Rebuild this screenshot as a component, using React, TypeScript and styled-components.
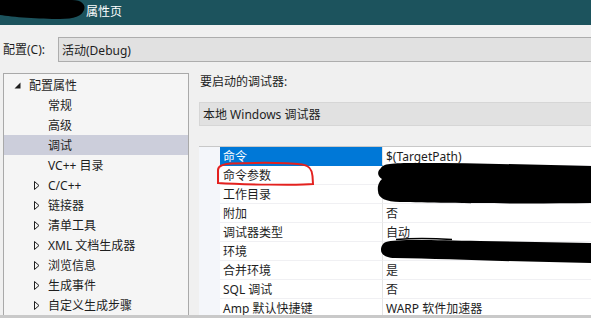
import React from "react";
import styled, { createGlobalStyle } from "styled-components";

const Global = createGlobalStyle`
  html, body { margin: 0; padding: 0; background: #f0f0f0; }
  body {
    font-family: "Noto Sans", "Noto Sans CJK SC", sans-serif;
    font-size: 12px;
    color: #1e1e1e;
  }
`;

const Window = styled.div`
  position: relative;
  width: 591px;
  height: 318px;
  overflow: hidden;
  display: flex;
  flex-direction: column;
  background: #f0f0f0;
`;

const TitleBar = styled.div`
  flex: none;
  height: 25px;
  box-sizing: border-box;
  padding: 0 0 3px 86px;
  background: #1c535d;
  color: #ffffff;
  display: flex;
  align-items: center;
  font-size: 12px;
`;

const ConfigRow = styled.div`
  flex: none;
  height: 48px;
  box-sizing: border-box;
  padding: 12px 0 11px 3px;
  display: flex;
  align-items: center;
`;

const ConfigLabel = styled.span`
  width: 55px;
  flex: none;
  line-height: 16px;
`;

const ComboBox = styled.div<{ $h: number; $border: string }>`
  flex: 1;
  height: ${(p) => p.$h}px;
  box-sizing: border-box;
  background: #e1e1e1;
  border: 1px solid ${(p) => p.$border};
  border-right: none;
  display: flex;
  align-items: center;
  padding-left: 3px;
  white-space: nowrap;
`;

const Body = styled.div`
  flex: none;
  height: 242px;
  display: flex;
  min-height: 0;
`;

const TreePanel = styled.div`
  flex: none;
  width: 186px;
  margin-left: 3px;
  box-sizing: border-box;
  border: 1px solid #a9a9a9;
  border-bottom: none;
  background: #f5f5f5;
  padding-top: 1px;
  display: flex;
  flex-direction: column;
`;

const TreeRow = styled.div<{ $indent: number; $selected?: boolean }>`
  height: 20px;
  flex: none;
  display: flex;
  align-items: center;
  padding-left: ${(p) => p.$indent}px;
  background: ${(p) => (p.$selected ? "#cccedb" : "transparent")};
  white-space: nowrap;
`;

const ArrowSlot = styled.span<{ $w: number }>`
  width: ${(p) => p.$w}px;
  flex: none;
  display: flex;
  align-items: center;
`;

const RightPane = styled.div`
  flex: 1;
  margin-left: 10px;
  display: flex;
  flex-direction: column;
  min-width: 0;
`;

const PaneLabel = styled.div`
  height: 18px;
  line-height: 18px;
  padding-left: 1px;
`;

const ComboWrap = styled.div`
  margin-top: 11px;
  display: flex;
`;

const Grid = styled.div`
  margin-top: 20px;
  flex: 1;
  border-top: 1px solid #c8c8c8;
  background: #ffffff;
  display: flex;
  flex-direction: column;
`;

const GridRow = styled.div`
  display: grid;
  grid-template-columns: 21px 163px 1fr;
  height: 19px;
  flex: none;
`;

const Margin = styled.div`
  background: #f4f6fa;
`;

const NameCell = styled.div<{ $selected?: boolean }>`
  box-sizing: border-box;
  padding-left: 3px;
  display: flex;
  align-items: center;
  white-space: nowrap;
  background: ${(p) => (p.$selected ? "#0078d7" : "#ffffff")};
  color: ${(p) => (p.$selected ? "#ffffff" : "#1e1e1e")};
  border-bottom: 1px solid ${(p) => (p.$selected ? "#0078d7" : "#f0f0f3")};
  border-right: 1px solid #e4e4e4;
`;

const ValueCell = styled.div`
  box-sizing: border-box;
  padding-left: 3px;
  display: flex;
  align-items: center;
  white-space: nowrap;
  border-bottom: 1px solid #f0f0f3;
`;

const BottomStrip = styled.div`
  flex: none;
  height: 3px;
  background: #c9c9c9;
`;

const Overlay = styled.svg`
  position: absolute;
  left: 0;
  top: 0;
  pointer-events: none;
`;

const Expanded = () => (
  <svg width="7" height="7" viewBox="0 0 7 7">
    <path d="M6.5 0.5 L6.5 6.5 L0.5 6.5 Z" fill="#1e1e1e" />
  </svg>
);

const Collapsed = () => (
  <svg width="6" height="9" viewBox="0 0 6 9">
    <path d="M0.5 0.5 L5 4.5 L0.5 8.5 Z" fill="none" stroke="#1e1e1e" strokeWidth="1" />
  </svg>
);

type Node = { label: string; arrow?: boolean; selected?: boolean };

const children: Node[] = [
  { label: "常规" },
  { label: "高级" },
  { label: "调试", selected: true },
  { label: "VC++ 目录" },
  { label: "C/C++", arrow: true },
  { label: "链接器", arrow: true },
  { label: "清单工具", arrow: true },
  { label: "XML 文档生成器", arrow: true },
  { label: "浏览信息", arrow: true },
  { label: "生成事件", arrow: true },
  { label: "自定义生成步骤", arrow: true },
];

const props: [string, string][] = [
  ["命令", "$(TargetPath)"],
  ["命令参数", ""],
  ["工作目录", ""],
  ["附加", "否"],
  ["调试器类型", "自动"],
  ["环境", ""],
  ["合并环境", "是"],
  ["SQL 调试", "否"],
  ["Amp 默认快捷键", "WARP 软件加速器"],
];

export default function App() {
  return (
    <>
      <Global />
      <Window>
        <TitleBar>属性页</TitleBar>
        <ConfigRow>
          <ConfigLabel>配置(C):</ConfigLabel>
          <ComboBox $h={25} $border="#adadad">活动(Debug)</ComboBox>
        </ConfigRow>
        <Body>
          <TreePanel>
            <TreeRow $indent={10}>
              <ArrowSlot $w={15}>
                <Expanded />
              </ArrowSlot>
              配置属性
            </TreeRow>
            {children.map((c) => (
              <TreeRow key={c.label} $indent={30} $selected={c.selected}>
                <ArrowSlot $w={14}>{c.arrow ? <Collapsed /> : null}</ArrowSlot>
                {c.label}
              </TreeRow>
            ))}
          </TreePanel>
          <RightPane>
            <PaneLabel>要启动的调试器:</PaneLabel>
            <ComboWrap>
              <ComboBox $h={24} $border="#d6d6d6">本地 Windows 调试器</ComboBox>
            </ComboWrap>
            <Grid>
              {props.map(([k, v], i) => (
                <GridRow key={k}>
                  <Margin />
                  <NameCell $selected={i === 0}>{k}</NameCell>
                  <ValueCell>{v}</ValueCell>
                </GridRow>
              ))}
            </Grid>
          </RightPane>
        </Body>
        <BottomStrip />
        <Overlay width="591" height="318" viewBox="0 0 591 318">
          <path
            d="M0,0 H72 C82,0 86,5 84,10 C82,16 74,19 60,19 C40,19 12,17 0,15 Z"
            fill="#000"
          />
          <path
            d="M381,168 C384,163 395,163 420,163 C480,163 540,165 591,166 L591,203 C520,204 440,203 400,202 C386,202 378,198 378,191 C377,185 380,181 382,179 C377,176 377,171 381,168 Z"
            fill="#000"
          />
          <path
            d="M386,242 C395,239 430,240 480,241 L591,243 L591,263 C520,262 450,259 395,258 C385,258 381,254 381,250 C381,246 383,243 386,242 Z"
            fill="#000"
          />
          <path d="M396,239.5 Q420,237.5 452,239.5" fill="none" stroke="#000" strokeWidth="1.5" />
          <path
            d="M218,183 L218,170 C218,166 222,164 232,163.5 C260,162.5 290,163 302,164.5 C310,165.5 312,170 312.5,176 L313,184 C300,185.5 240,184.5 218,183 Z"
            fill="none"
            stroke="#e3211f"
            strokeWidth="2"
          />
        </Overlay>
      </Window>
    </>
  );
}
